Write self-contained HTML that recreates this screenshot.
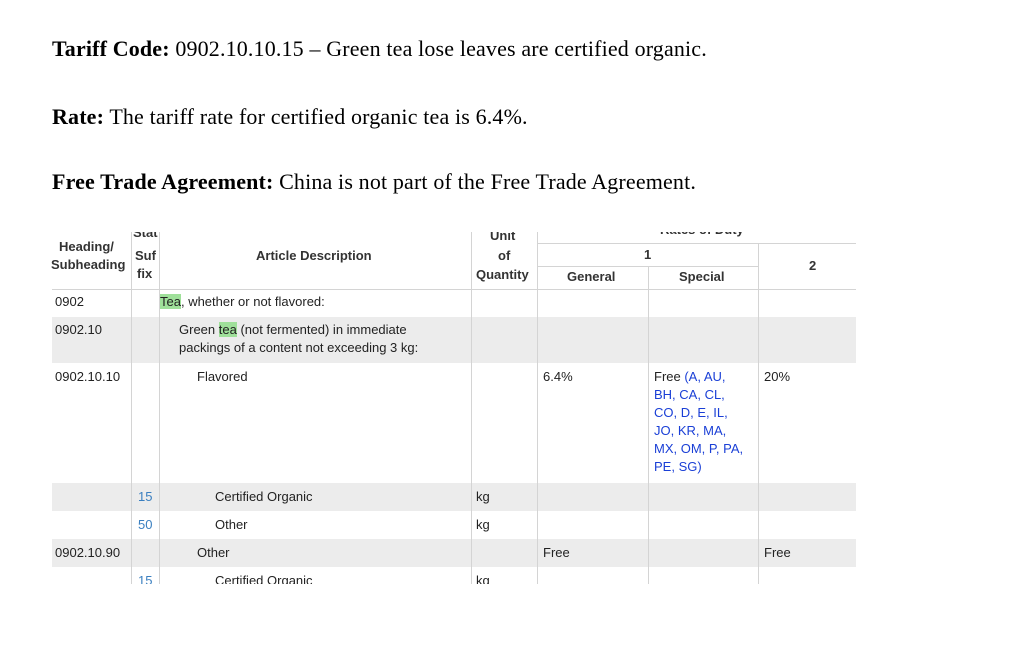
<!DOCTYPE html>
<html><head><meta charset="utf-8"><style>
body{margin:0;width:1024px;height:664px;background:#fff;position:relative;overflow:hidden}
.t{position:absolute;left:52px;font-family:"Liberation Serif",serif;font-size:22px;letter-spacing:0.15px;color:#000;white-space:nowrap}
.a{position:absolute;font-family:"Liberation Sans",sans-serif;font-size:13px;color:#222;white-space:nowrap;line-height:18px}
.b{font-weight:bold;color:#333}
.h{position:absolute;background:#d4d4d4;height:1px}
.v{position:absolute;background:#d4d4d4;width:1px}
.g{position:absolute;left:52px;width:804px;background:#ececec}
.bl{color:#1a3fd6}.lb{color:#3a7fc0}
.hl{background:#9fe09a}
</style></head><body>
<div class="g" style="top:317px;height:46px"></div>
<div class="g" style="top:483px;height:28px"></div>
<div class="g" style="top:539px;height:28px"></div>

<div class="h" style="left:52px;width:804px;top:289px"></div>
<div class="h" style="left:537px;width:319px;top:243px"></div>
<div class="h" style="left:537px;width:221px;top:266px"></div>
<div class="v" style="left:131px;top:232px;height:352px"></div>
<div class="v" style="left:159px;top:232px;height:352px"></div>
<div class="v" style="left:471px;top:232px;height:352px"></div>
<div class="v" style="left:537px;top:232px;height:352px"></div>
<div class="v" style="left:648px;top:266px;height:318px"></div>
<div class="v" style="left:758px;top:243px;height:341px"></div>

<div class="t" style="top:36px"><b>Tariff Code:</b> 0902.10.10.15 – Green tea lose leaves are certified organic.</div>
<div class="t" style="top:104px"><b>Rate:</b> The tariff rate for certified organic tea is 6.4%.</div>
<div class="t" style="top:169px"><b>Free Trade Agreement:</b> China is not part of the Free Trade Agreement.</div>

<div style="position:absolute;left:0;top:232px;width:1024px;height:12px;overflow:hidden">
<div class="a b" style="left:133px;top:-8px">Stat</div>
<div class="a b" style="left:490px;top:-5px">Unit</div>
<div class="a b" style="left:660px;top:-11px">Rates of Duty</div>
</div>
<div class="a b" style="left:59px;top:238px">Heading/</div>
<div class="a b" style="left:51px;top:256px">Subheading</div>
<div class="a b" style="left:135px;top:247px">Suf</div>
<div class="a b" style="left:137px;top:265px">fix</div>
<div class="a b" style="left:256px;top:247px">Article Description</div>
<div class="a b" style="left:498px;top:247px">of</div>
<div class="a b" style="left:476px;top:266px">Quantity</div>
<div class="a b" style="left:644px;top:246px">1</div>
<div class="a b" style="left:809px;top:257px">2</div>
<div class="a b" style="left:567px;top:268px">General</div>
<div class="a b" style="left:679px;top:268px">Special</div>

<div class="a" style="left:55px;top:293px">0902</div>
<div class="a" style="left:160px;top:293px"><span class="hl">Tea</span>, whether or not flavored:</div>
<div class="a" style="left:55px;top:321px">0902.10</div>
<div class="a" style="left:179px;top:321px">Green <span class="hl">tea</span> (not fermented) in immediate<br>packings of a content not exceeding 3 kg:</div>
<div class="a" style="left:55px;top:368px">0902.10.10</div>
<div class="a" style="left:197px;top:368px">Flavored</div>
<div class="a" style="left:543px;top:368px">6.4%</div>
<div class="a" style="left:654px;top:368px">Free <span class="bl">(A, AU,<br>BH, CA, CL,<br>CO, D, E, IL,<br>JO, KR, MA,<br>MX, OM, P, PA,<br>PE, SG)</span></div>
<div class="a" style="left:764px;top:368px">20%</div>
<div class="a lb" style="left:138px;top:488px">15</div>
<div class="a" style="left:215px;top:488px">Certified Organic</div>
<div class="a" style="left:476px;top:488px">kg</div>
<div class="a lb" style="left:138px;top:516px">50</div>
<div class="a" style="left:215px;top:516px">Other</div>
<div class="a" style="left:476px;top:516px">kg</div>
<div class="a" style="left:55px;top:544px">0902.10.90</div>
<div class="a" style="left:197px;top:544px">Other</div>
<div class="a" style="left:543px;top:544px">Free</div>
<div class="a" style="left:764px;top:544px">Free</div>
<div style="position:absolute;left:0;top:570px;width:1024px;height:14px;overflow:hidden">
<div class="a lb" style="left:138px;top:2px">15</div>
<div class="a" style="left:215px;top:2px">Certified Organic</div>
<div class="a" style="left:476px;top:2px">kg</div>
</div>
</body></html>
